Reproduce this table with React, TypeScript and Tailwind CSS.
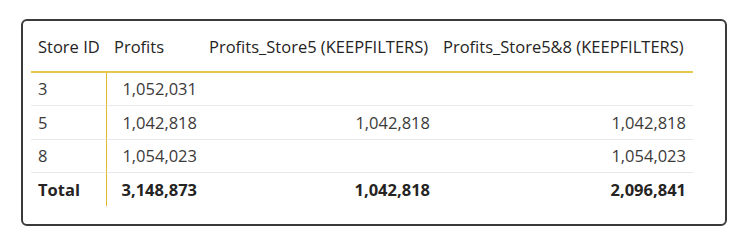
const rows = [
  { id: "3", profits: "1,052,031", store5: "", store58: "" },
  { id: "5", profits: "1,042,818", store5: "1,042,818", store58: "1,042,818" },
  { id: "8", profits: "1,054,023", store5: "", store58: "1,054,023" },
];

const font = { fontFamily: '"Segoe UI", "Open Sans", "Noto Sans", sans-serif' };

export default function App() {
  return (
    <div className="w-[748px] h-[246px] bg-white pt-[19px] pl-[21px]" style={font}>
      <div className="w-[706px] h-[207px] rounded-[6px] border-2 border-[#3a3a3a] bg-white pl-[8px] pt-[1px]">
        <table className="table-fixed border-separate border-spacing-0 w-[662px] text-[16.5px] text-[#252423]">
          <colgroup>
            <col className="w-[76px]" />
            <col className="w-[95px]" />
            <col className="w-[234px]" />
            <col className="w-[257px]" />
          </colgroup>
          <thead>
            <tr className="h-[51px]">
              <th className="font-normal text-left pl-[7px] pt-[1px] whitespace-nowrap border-b-2 border-b-[#e6c84e]">Store ID</th>
              <th className="font-normal text-left pl-[7px] pt-[1px] whitespace-nowrap border-b-2 border-b-[#e6c84e]">Profits</th>
              <th className="font-normal text-left pl-[7px] pt-[1px] whitespace-nowrap border-b-2 border-b-[#e6c84e]">Profits_Store5 (KEEPFILTERS)</th>
              <th className="font-normal text-left pl-[7px] pt-[1px] whitespace-nowrap border-b-2 border-b-[#e6c84e]">Profits_Store5&amp;8 (KEEPFILTERS)</th>
            </tr>
          </thead>
          <tbody className="text-[#3b3a39]">
            {rows.map((r) => (
              <tr key={r.id} className="h-[33.4px]">
                <td className="pl-[7px] pt-[1px] border-b border-b-[#e9e9e9] border-r border-r-[#dcbb2f]">{r.id}</td>
                <td className="text-right pr-[5px] pt-[1px] border-b border-b-[#e9e9e9]">{r.profits}</td>
                <td className="text-right pr-[6px] pt-[1px] border-b border-b-[#e9e9e9]">{r.store5}</td>
                <td className="text-right pr-[7px] pt-[1px] border-b border-b-[#e9e9e9]">{r.store58}</td>
              </tr>
            ))}
            <tr className="h-[33px] font-bold text-[#252423]">
              <td className="pl-[7px] pt-[1px] border-r border-r-[#dcbb2f]">Total</td>
              <td className="text-right pr-[5px] pt-[1px]">3,148,873</td>
              <td className="text-right pr-[6px] pt-[1px]">1,042,818</td>
              <td className="text-right pr-[7px] pt-[1px]">2,096,841</td>
            </tr>
          </tbody>
        </table>
      </div>
    </div>
  );
}
